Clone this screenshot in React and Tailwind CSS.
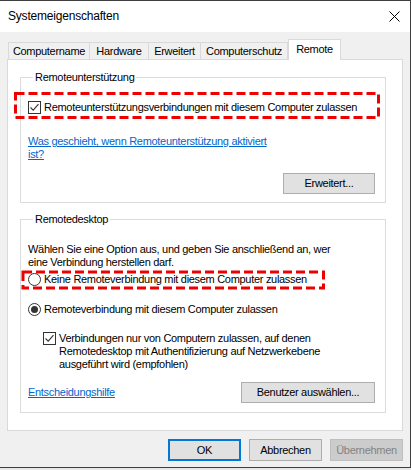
import React from "react";

const tabs = [
  { label: "Computername", w: "w-[82px]" },
  { label: "Hardware", w: "w-[60px]" },
  { label: "Erweitert", w: "w-[53px]" },
  { label: "Computerschutz", w: "w-[88px]" },
];

function CheckBox() {
  return (
    <span className="w-[13px] h-[13px] shrink-0 border border-[#333333] bg-white flex items-center justify-center">
      <svg width="11" height="11" viewBox="0 0 11 11">
        <path d="M1.5 5.5 L4.2 8.2 L9.5 2.2" fill="none" stroke="#333333" strokeWidth="1.1" />
      </svg>
    </span>
  );
}

function Radio({ checked }) {
  return (
    <span className="w-[13px] h-[13px] shrink-0 rounded-full border border-[#333333] bg-white flex items-center justify-center">
      {checked && <span className="w-[7px] h-[7px] rounded-full bg-[#333333]" />}
    </span>
  );
}

function WinButton({ children, className = "" }) {
  return (
    <div className={`h-[21px] flex items-center justify-center bg-[#e1e1e1] border border-[#adadad] text-black ${className}`}>
      {children}
    </div>
  );
}

export default function App() {
  return (
    <div className="relative w-[411px] h-[470px] bg-[#e8e8e8] text-[11px] tracking-[-0.3px] text-black font-['Liberation_Sans',Arial,sans-serif] whitespace-nowrap overflow-hidden">
      <div className="w-[411px] h-[468px] border-t border-r border-b border-[#3f3f3f] bg-[#f0f0f0] flex flex-col">
        {/* Titelleiste */}
        <div className="h-[31px] bg-white flex items-center justify-between pl-[8px] pr-[10px]">
          <span className="leading-[15px] text-[12px] tracking-[-0.2px]">Systemeigenschaften</span>
          <svg width="11" height="11" viewBox="0 0 11 11">
            <path d="M0.5 0.5 L10.5 10.5 M10.5 0.5 L0.5 10.5" stroke="#000" strokeWidth="1" />
          </svg>
        </div>

        <div className="pt-[7px]">
          {/* Reiter */}
          <div className="relative z-10 flex items-end h-[21px] -mb-px ml-[8px]">
            {tabs.map((t, i) => (
              <div
                key={t.label}
                className={`${t.w} h-[17px] mb-px flex items-center justify-center border-l border-t border-r border-[#d9d9d9] bg-[#f0f0f0] leading-[15px] ${i > 0 ? "-ml-px" : ""}`}
              >
                {t.label}
              </div>
            ))}
            <div className="w-[53px] h-[21px] flex items-center justify-center border-l border-t border-r border-[#d9d9d9] bg-white leading-[15px] pb-[2px]">
              Remote
            </div>
          </div>

          {/* Reiterinhalt */}
          <div className="ml-[7px] w-[396px] h-[372px] border border-[#d9d9d9] bg-white pt-[10px]">
            <fieldset className="ml-[12px] w-[366px] border border-[#dcdcdc] pl-[7px] pr-[10px] pb-[8px]">
              <legend className="ml-[5px] px-[2px] leading-[15px]">Remoteunterstützung</legend>
              <div className="mt-[16px] h-[13px] flex items-center gap-[3px] leading-[13px]">
                <CheckBox />
                <span>Remoteunterstützungsverbindungen mit diesem Computer zulassen</span>
              </div>
              <div className="mt-[21px] leading-[13px] text-[#0066cc] underline">
                Was geschieht, wenn Remoteunterstützung aktiviert
                <br />
                ist?
              </div>
              <div className="mt-[12px] flex justify-end">
                <WinButton className="w-[92px]">Erweitert...</WinButton>
              </div>
            </fieldset>

            <fieldset className="mt-[9px] ml-[12px] w-[366px] border border-[#dcdcdc] pl-[7px] pr-[10px] pb-[9px]">
              <legend className="ml-[5px] px-[2px] leading-[15px]">Remotedesktop</legend>
              <p className="mt-[16px] leading-[13px]">
                Wählen Sie eine Option aus, und geben Sie anschließend an, wer
                <br />
                eine Verbindung herstellen darf.
              </p>
              <div className="mt-[4px] h-[13px] flex items-center gap-[3px] leading-[13px]">
                <Radio />
                <span>Keine Remoteverbindung mit diesem Computer zulassen</span>
              </div>
              <div className="mt-[17px] h-[13px] flex items-center gap-[3px] leading-[13px]">
                <Radio checked />
                <span>Remoteverbindung mit diesem Computer zulassen</span>
              </div>
              <div className="mt-[16px] ml-[15px] flex items-start gap-[3px] leading-[13px]">
                <CheckBox />
                <span>
                  Verbindungen nur von Computern zulassen, auf denen
                  <br />
                  Remotedesktop mit Authentifizierung auf Netzwerkebene
                  <br />
                  ausgeführt wird (empfohlen)
                </span>
              </div>
              <div className="mt-[11px] flex items-center justify-between">
                <span className="text-[#0066cc] underline leading-[13px]">Entscheidungshilfe</span>
                <WinButton className="w-[134px]">Benutzer auswählen...</WinButton>
              </div>
            </fieldset>
          </div>

          {/* Dialogschaltflächen */}
          <div className="mt-[8px] pr-[7px] flex justify-end gap-[8px]">
            <div className="w-[73px] h-[22px] flex items-center justify-center bg-[#e1e1e1] border-2 border-[#0078d7]">OK</div>
            <div className="w-[73px] h-[22px] flex items-center justify-center bg-[#e1e1e1] border border-[#adadad]">Abbrechen</div>
            <div className="w-[73px] h-[22px] flex items-center justify-center bg-[#cccccc] border border-[#bfbfbf] text-[#838383]">Übernehmen</div>
          </div>
        </div>
      </div>

      {/* rote Markierungen */}
      <svg className="absolute inset-0 pointer-events-none" width="411" height="470">
        <rect x="15.5" y="93.5" width="363" height="24" fill="none" stroke="#ee0000" strokeWidth="3" strokeDasharray="9 4" />
        <rect x="23" y="272" width="300.5" height="16" fill="none" stroke="#ee0000" strokeWidth="3" strokeDasharray="9 4" />
      </svg>
    </div>
  );
}
